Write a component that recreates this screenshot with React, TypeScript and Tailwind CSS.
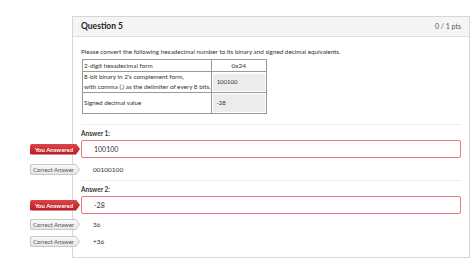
import React from "react";

function Tag({ kind }: { kind: "you" | "correct" }) {
  if (kind === "you") {
    return (
      <div className="w-[50px] h-[11px] shrink-0 [clip-path:polygon(0_0,46px_0,50px_50%,46px_100%,0_100%)] bg-gradient-to-b from-[#e0444a] to-[#b3161d] rounded-l-[2px] flex items-center justify-center pr-[2px] text-[6px] font-bold text-white">
        You Answered
      </div>
    );
  }
  return (
    <div className="w-[50px] h-[11px] shrink-0 [clip-path:polygon(0_0,46px_0,50px_50%,46px_100%,0_100%)] bg-[#c8c8c8] rounded-l-[2px] p-px">
      <div className="w-full h-full [clip-path:polygon(0_0,45px_0,48px_50%,45px_100%,0_100%)] bg-gradient-to-b from-[#fafafa] to-[#e6e6e6] rounded-l-[2px] flex items-center justify-center pr-[3px] text-[6px] text-[#555]">
        Correct Answer
      </div>
    </div>
  );
}

function YouRow({ value }: { value: string }) {
  return (
    <div className="flex items-center -ml-[51px] gap-[1px]">
      <Tag kind="you" />
      <div className="flex-1 h-[18px] border border-[#e27a7f] rounded-[2px] flex items-center pl-[12px] text-[7px] text-[#333]">
        {value}
      </div>
    </div>
  );
}

function CorrectRow({ value }: { value: string }) {
  return (
    <div className="flex items-center -ml-[51px] gap-[1px] h-[17px]">
      <Tag kind="correct" />
      <div className="pl-[12px] text-[6.5px] text-[#333]">{value}</div>
    </div>
  );
}

export default function App() {
  return (
    <div className="w-[474px] h-[264px] bg-white overflow-hidden font-['Lato','Liberation_Sans',sans-serif]">
      <div className="ml-[72px] mt-[16px] w-[398px] h-[242px] border border-[#d6d6d6] flex flex-col">
        <div className="h-[20px] bg-[#f5f5f5] border-b border-[#e0e0e0] flex items-center justify-between px-[8px]">
          <span className="text-[8.5px] font-bold text-[#222]">Question 5</span>
          <span className="text-[7px] text-[#555]">0 / 1 pts</span>
        </div>
        <div className="pl-[8px] pr-[8px] pt-[11px]">
          <p className="text-[6.3px] text-[#333] leading-[8px]">
            Please convert the following hexadecimal number to its binary and signed decimal equivalents.
          </p>
          <table className="mt-[3px] ml-[1px] w-[185px] border-collapse border border-[#999] text-[6.3px] text-[#333] leading-[10px]">
            <tbody>
              <tr className="h-[12px]">
                <td className="border border-[#999] pl-[1px] w-[128px] whitespace-nowrap">2-digit hexadecimal form</td>
                <td className="border border-[#999] text-center text-[6.5px]">0x24</td>
              </tr>
              <tr className="h-[20px]">
                <td className="border border-[#999] pl-[1px] whitespace-nowrap">
                  8-bit binary in 2's complement form,
                  <br />
                  with comma (,) as the delimiter of every 8 bits.
                </td>
                <td className="border border-[#999] p-[1px]">
                  <div className="bg-[#ececec] h-[17px] flex items-center pl-[4px] text-[6px]">100100</div>
                </td>
              </tr>
              <tr className="h-[21px]">
                <td className="border border-[#999] pl-[1px]">Signed decimal value</td>
                <td className="border border-[#999] p-[1px]">
                  <div className="bg-[#ececec] h-[18px] flex items-center pl-[4px] text-[6px]">-28</div>
                </td>
              </tr>
            </tbody>
          </table>
          <div className="mt-[10px] border-t border-[#eeeeee] pt-[5px]">
            <div className="text-[6.5px] font-bold text-[#333] leading-[8px]">Answer 1:</div>
            <div className="mt-[2px]">
              <YouRow value="100100" />
              <div className="mt-[3px]">
                <CorrectRow value="00100100" />
              </div>
            </div>
          </div>
          <div className="mt-[2px] border-t border-[#eeeeee] pt-[5px]">
            <div className="text-[6.5px] font-bold text-[#333] leading-[8px]">Answer 2:</div>
            <div className="mt-[2px]">
              <YouRow value="-28" />
              <div className="mt-[2px]">
                <CorrectRow value="36" />
                <CorrectRow value="+36" />
              </div>
            </div>
          </div>
        </div>
      </div>
    </div>
  );
}
